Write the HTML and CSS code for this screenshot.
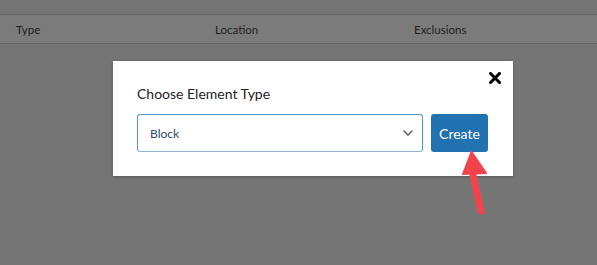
FILE: index.html
```html
<!DOCTYPE html>
<html lang="en">

<head>
    <meta charset="UTF-8">
    <meta name="viewport" content="width=device-width, initial-scale=1.0">
    <title>Elements</title>
    <link rel="stylesheet" href="styles.css">
</head>

<body>
    <div class="page">
        <div class="table-head">
            <span>Type</span>
            <span>Location</span>
            <span>Exclusions</span>
        </div>
    </div>

    <div class="modal">
        <button class="close-btn" aria-label="Close">
            <svg width="12" height="12" viewBox="0 0 12 12">
                <path d="M1.5 1.5 L10.5 10.5 M10.5 1.5 L1.5 10.5" stroke="#000" stroke-width="3" stroke-linecap="square" />
            </svg>
        </button>
        <h2 class="modal-title">Choose Element Type</h2>
        <div class="modal-row">
            <div class="select">
                <span>Block</span>
                <svg width="12" height="8" viewBox="0 0 12 8">
                    <path d="M1.5 1.5 L6 6 L10.5 1.5" fill="none" stroke="#555" stroke-width="1.3" />
                </svg>
            </div>
            <button class="create-btn">Create</button>
        </div>
    </div>

    <svg class="arrow" width="40" height="70" viewBox="0 0 40 70">
        <path d="M23 25 L31 61" stroke="#f2434b" stroke-width="7" stroke-linecap="round" />
        <path d="M21.5 2 L13 24 L36 23 Z" fill="#f2434b" stroke="#f2434b" stroke-width="2" stroke-linejoin="round" />
    </svg>
</body>

</html>
```

FILE: styles.css
```css
body {
    margin: 0;
    background: #757575;
    font-family: Lato, "Noto Sans", sans-serif;
    height: 265px;
    overflow: hidden;
}

.page {
    padding-top: 14px;
}

.table-head {
    display: grid;
    grid-template-columns: 199px 199px 1fr;
    padding-left: 16px;
    height: 28px;
    align-items: center;
    border-top: 1px solid #636363;
    border-bottom: 1px solid #636363;
    background: #7b7b7b;
    font-size: 11.5px;
    color: #1c1f22;
}

.modal {
    position: absolute;
    left: 113px;
    top: 61px;
    width: 400px;
    height: 115px;
    box-sizing: border-box;
    padding: 22px 25px 0 24px;
    background: #fff;
    box-shadow: 0 1px 3px rgba(0, 0, 0, 0.25);
}

.close-btn {
    position: absolute;
    top: 10px;
    right: 11px;
    width: 14px;
    height: 14px;
    padding: 0;
    border: none;
    background: none;
    display: flex;
    align-items: center;
    justify-content: center;
}

.modal-title {
    margin: 0 0 9px;
    font-size: 14px;
    font-weight: 400;
    line-height: 22px;
    color: #1d2327;
}

.modal-row {
    display: flex;
    gap: 8px;
}

.select {
    width: 286px;
    height: 38px;
    box-sizing: border-box;
    border: 1px solid #4f94d4;
    border-bottom-color: #8db5d8;
    border-radius: 3px;
    display: flex;
    align-items: center;
    justify-content: space-between;
    padding: 0 8px 0 12px;
    font-size: 12px;
    color: #2c4a6a;
}

.create-btn {
    width: 57px;
    height: 38px;
    border: none;
    border-radius: 3px;
    background: #2271b1;
    color: #fff;
    font-family: inherit;
    font-size: 14px;
    padding: 0;
}

.arrow {
    position: absolute;
    left: 450px;
    top: 150px;
}
```
